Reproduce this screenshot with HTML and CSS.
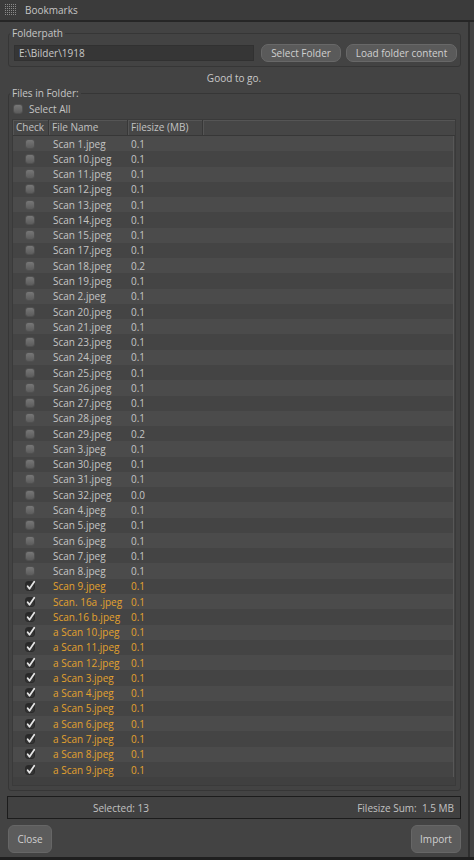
FILE: index.html
```html
<!DOCTYPE html>
<html>
<head>
<meta charset="utf-8">
<link rel="stylesheet" href="styles.css">
</head>
<body>
<div class="window">
  <div class="titlebar">
    <svg class="grip" width="11" height="12" viewBox="0 0 11 12">
      <defs><pattern id="dots" width="2" height="2" patternUnits="userSpaceOnUse"><rect width="1" height="1" fill="#8a8a8a"/></pattern></defs>
      <rect width="11" height="12" fill="url(#dots)"/>
    </svg>
    <span class="title">Bookmarks</span>
  </div>
  <div class="panel">
    <fieldset class="group">
      <legend>Folderpath</legend>
      <div class="pathrow">
        <div class="pathfield">E:\Bilder\1918</div>
        <button class="btn btn-select">Select Folder</button>
        <button class="btn btn-load">Load folder content</button>
      </div>
    </fieldset>
    <div class="status-msg">Good to go.</div>
    <fieldset class="group files">
      <legend>Files in Folder:</legend>
      <div class="selectall"><span class="cb"></span><span>Select All</span></div>
      <div class="table">
        <div class="thead">
          <div class="th">Check</div>
          <div class="th">File Name</div>
          <div class="th">Filesize (MB)</div>
          <div class="th"></div>
        </div>
        <div class="tbody">
          <div class="row"><span class="cell c"><span class="cb"></span></span><span class="cell">Scan 1.jpeg</span><span class="cell s">0.1</span></div>
          <div class="row"><span class="cell c"><span class="cb"></span></span><span class="cell">Scan 10.jpeg</span><span class="cell s">0.1</span></div>
          <div class="row"><span class="cell c"><span class="cb"></span></span><span class="cell">Scan 11.jpeg</span><span class="cell s">0.1</span></div>
          <div class="row"><span class="cell c"><span class="cb"></span></span><span class="cell">Scan 12.jpeg</span><span class="cell s">0.1</span></div>
          <div class="row"><span class="cell c"><span class="cb"></span></span><span class="cell">Scan 13.jpeg</span><span class="cell s">0.1</span></div>
          <div class="row"><span class="cell c"><span class="cb"></span></span><span class="cell">Scan 14.jpeg</span><span class="cell s">0.1</span></div>
          <div class="row"><span class="cell c"><span class="cb"></span></span><span class="cell">Scan 15.jpeg</span><span class="cell s">0.1</span></div>
          <div class="row"><span class="cell c"><span class="cb"></span></span><span class="cell">Scan 17.jpeg</span><span class="cell s">0.1</span></div>
          <div class="row"><span class="cell c"><span class="cb"></span></span><span class="cell">Scan 18.jpeg</span><span class="cell s">0.2</span></div>
          <div class="row"><span class="cell c"><span class="cb"></span></span><span class="cell">Scan 19.jpeg</span><span class="cell s">0.1</span></div>
          <div class="row"><span class="cell c"><span class="cb"></span></span><span class="cell">Scan 2.jpeg</span><span class="cell s">0.1</span></div>
          <div class="row"><span class="cell c"><span class="cb"></span></span><span class="cell">Scan 20.jpeg</span><span class="cell s">0.1</span></div>
          <div class="row"><span class="cell c"><span class="cb"></span></span><span class="cell">Scan 21.jpeg</span><span class="cell s">0.1</span></div>
          <div class="row"><span class="cell c"><span class="cb"></span></span><span class="cell">Scan 23.jpeg</span><span class="cell s">0.1</span></div>
          <div class="row"><span class="cell c"><span class="cb"></span></span><span class="cell">Scan 24.jpeg</span><span class="cell s">0.1</span></div>
          <div class="row"><span class="cell c"><span class="cb"></span></span><span class="cell">Scan 25.jpeg</span><span class="cell s">0.1</span></div>
          <div class="row"><span class="cell c"><span class="cb"></span></span><span class="cell">Scan 26.jpeg</span><span class="cell s">0.1</span></div>
          <div class="row"><span class="cell c"><span class="cb"></span></span><span class="cell">Scan 27.jpeg</span><span class="cell s">0.1</span></div>
          <div class="row"><span class="cell c"><span class="cb"></span></span><span class="cell">Scan 28.jpeg</span><span class="cell s">0.1</span></div>
          <div class="row"><span class="cell c"><span class="cb"></span></span><span class="cell">Scan 29.jpeg</span><span class="cell s">0.2</span></div>
          <div class="row"><span class="cell c"><span class="cb"></span></span><span class="cell">Scan 3.jpeg</span><span class="cell s">0.1</span></div>
          <div class="row"><span class="cell c"><span class="cb"></span></span><span class="cell">Scan 30.jpeg</span><span class="cell s">0.1</span></div>
          <div class="row"><span class="cell c"><span class="cb"></span></span><span class="cell">Scan 31.jpeg</span><span class="cell s">0.1</span></div>
          <div class="row"><span class="cell c"><span class="cb"></span></span><span class="cell">Scan 32.jpeg</span><span class="cell s">0.0</span></div>
          <div class="row"><span class="cell c"><span class="cb"></span></span><span class="cell">Scan 4.jpeg</span><span class="cell s">0.1</span></div>
          <div class="row"><span class="cell c"><span class="cb"></span></span><span class="cell">Scan 5.jpeg</span><span class="cell s">0.1</span></div>
          <div class="row"><span class="cell c"><span class="cb"></span></span><span class="cell">Scan 6.jpeg</span><span class="cell s">0.1</span></div>
          <div class="row"><span class="cell c"><span class="cb"></span></span><span class="cell">Scan 7.jpeg</span><span class="cell s">0.1</span></div>
          <div class="row"><span class="cell c"><span class="cb"></span></span><span class="cell">Scan 8.jpeg</span><span class="cell s">0.1</span></div>
          <div class="row on"><span class="cell c"><span class="cb chk"><svg viewBox="0 0 10 10"><path d="M2.4 5.6 L4.1 8 L8.4 1.6"/></svg></span></span><span class="cell">Scan 9.jpeg</span><span class="cell s">0.1</span></div>
          <div class="row on"><span class="cell c"><span class="cb chk"><svg viewBox="0 0 10 10"><path d="M2.4 5.6 L4.1 8 L8.4 1.6"/></svg></span></span><span class="cell">Scan. 16a .jpeg</span><span class="cell s">0.1</span></div>
          <div class="row on"><span class="cell c"><span class="cb chk"><svg viewBox="0 0 10 10"><path d="M2.4 5.6 L4.1 8 L8.4 1.6"/></svg></span></span><span class="cell">Scan.16 b.jpeg</span><span class="cell s">0.1</span></div>
          <div class="row on"><span class="cell c"><span class="cb chk"><svg viewBox="0 0 10 10"><path d="M2.4 5.6 L4.1 8 L8.4 1.6"/></svg></span></span><span class="cell">a Scan 10.jpeg</span><span class="cell s">0.1</span></div>
          <div class="row on"><span class="cell c"><span class="cb chk"><svg viewBox="0 0 10 10"><path d="M2.4 5.6 L4.1 8 L8.4 1.6"/></svg></span></span><span class="cell">a Scan 11.jpeg</span><span class="cell s">0.1</span></div>
          <div class="row on"><span class="cell c"><span class="cb chk"><svg viewBox="0 0 10 10"><path d="M2.4 5.6 L4.1 8 L8.4 1.6"/></svg></span></span><span class="cell">a Scan 12.jpeg</span><span class="cell s">0.1</span></div>
          <div class="row on"><span class="cell c"><span class="cb chk"><svg viewBox="0 0 10 10"><path d="M2.4 5.6 L4.1 8 L8.4 1.6"/></svg></span></span><span class="cell">a Scan 3.jpeg</span><span class="cell s">0.1</span></div>
          <div class="row on"><span class="cell c"><span class="cb chk"><svg viewBox="0 0 10 10"><path d="M2.4 5.6 L4.1 8 L8.4 1.6"/></svg></span></span><span class="cell">a Scan 4.jpeg</span><span class="cell s">0.1</span></div>
          <div class="row on"><span class="cell c"><span class="cb chk"><svg viewBox="0 0 10 10"><path d="M2.4 5.6 L4.1 8 L8.4 1.6"/></svg></span></span><span class="cell">a Scan 5.jpeg</span><span class="cell s">0.1</span></div>
          <div class="row on"><span class="cell c"><span class="cb chk"><svg viewBox="0 0 10 10"><path d="M2.4 5.6 L4.1 8 L8.4 1.6"/></svg></span></span><span class="cell">a Scan 6.jpeg</span><span class="cell s">0.1</span></div>
          <div class="row on"><span class="cell c"><span class="cb chk"><svg viewBox="0 0 10 10"><path d="M2.4 5.6 L4.1 8 L8.4 1.6"/></svg></span></span><span class="cell">a Scan 7.jpeg</span><span class="cell s">0.1</span></div>
          <div class="row on"><span class="cell c"><span class="cb chk"><svg viewBox="0 0 10 10"><path d="M2.4 5.6 L4.1 8 L8.4 1.6"/></svg></span></span><span class="cell">a Scan 8.jpeg</span><span class="cell s">0.1</span></div>
          <div class="row on"><span class="cell c"><span class="cb chk"><svg viewBox="0 0 10 10"><path d="M2.4 5.6 L4.1 8 L8.4 1.6"/></svg></span></span><span class="cell">a Scan 9.jpeg</span><span class="cell s">0.1</span></div>
        </div>
      </div>
    </fieldset>
    <div class="statusbar">
      <div class="st-left">Selected: 13</div>
      <div class="st-right">Filesize Sum:&nbsp; 1.5 MB</div>
    </div>
    <div class="actions">
      <button class="btn big btn-close">Close</button>
      <button class="btn big btn-import">Import</button>
    </div>
  </div>
</div>
</body>
</html>
```
FILE: styles.css
```css
* { box-sizing: border-box; }
html, body { margin: 0; padding: 0; }
body {
  background: #3e3e3e;
  font-family: "Open Sans", "Liberation Sans", sans-serif;
  font-size: 10px;
  color: #c4c4c4;
}
.window {
  width: 474px;
  height: 860px;
  display: flex;
  flex-direction: column;
  background: #434343;
  border-bottom: 3px solid #1f1f1f;
}
.titlebar {
  height: 22px;
  flex: none;
  display: flex;
  align-items: center;
  gap: 9px;
  padding-left: 5px;
  background: #3b3b3b;
  border-bottom: 2px solid #262626;
}
.grip { display: block; }
.title { color: #c6c6c6; line-height: 12px; }
.panel {
  flex: 1;
  display: flex;
  flex-direction: column;
  padding: 5px 7px 4px 7px;
  min-height: 0;
  border-right: 2px solid #2e2e2e;
  margin-right: 4px;
}
.group {
  margin: 0 0 0 1px;
  border: 1px solid #363636;
  border-radius: 3px;
  padding: 5px 3px 4px 5px;
  min-width: 0;
}
.group legend {
  padding: 0 2px;
  margin-left: -4px;
  line-height: 12px;
  color: #c6c6c6;
}
.pathrow {
  display: flex;
  align-items: center;
  height: 18px;
}
.pathfield {
  flex: 1;
  height: 16px;
  background: #363636;
  border: 1px solid #313131;
  padding-left: 4px;
  line-height: 14px;
  color: #c8c8c8;
}
.btn {
  font-family: "Open Sans", "Liberation Sans", sans-serif;
  font-size: 10px;
  color: #d0d0d0;
  background: #5a5a5a;
  border: 1px solid #686868;
  border-radius: 7px;
  padding: 0;
  height: 18px;
  line-height: 15px;
}
.btn-select { width: 80px; margin-left: 7px; }
.btn-load { width: 111px; margin-left: 5px; }
.status-msg {
  text-align: center;
  line-height: 12px;
  margin: 5px 0 3px;
  color: #c8c8c8;
}
.files {
  flex: 1;
  display: flex;
  flex-direction: column;
  padding: 4px 4px 4px 3px;
  min-height: 0;
}
.files legend { margin-left: -2px; }
.selectall {
  display: flex;
  align-items: center;
  gap: 6px;
  height: 12px;
  padding-left: 1px;
}
.cb {
  display: block;
  flex: none;
  width: 10px;
  height: 10px;
  border-radius: 3px;
  background: linear-gradient(#777777, #5c5c5c);
  border: 1px solid #505050;
}
.cb.chk {
  background: linear-gradient(#262626, #383838);
  border: 1px solid #2a2a2a;
}
.cb.chk svg {
  display: block;
  width: 11px;
  height: 11px;
  margin: -2px 0 0 -1px;
  fill: none;
  stroke: #e4e4e4;
  stroke-width: 1.6;
  stroke-linecap: round;
  stroke-linejoin: round;
}
.table {
  flex: 1;
  margin-top: 4px;
  border: 1px solid #3a3a3a;
  background: #404040;
  display: flex;
  flex-direction: column;
  min-height: 0;
}
.thead {
  display: grid;
  grid-template-columns: 36px 79px 75px 1fr;
  height: 16px;
  background: #464646;
  border-bottom: 1px solid #373737;
}
.th {
  border-right: 1px solid #383838;
  box-shadow: inset 1px 1px 0 #555555;
  padding-left: 3px;
  line-height: 14px;
  color: #c2c2c2;
}
.th:last-child { border-right: none; }
.tbody { margin-right: 1px; border-right: 1px solid #575757; }
.row {
  display: grid;
  grid-template-columns: 36px 79px 75px 1fr;
  height: 15.27px;
  align-items: center;
  background: #444444;
}
.row:nth-child(odd) { background: #4b4b4b; }
.cell { line-height: 12px; padding-left: 4px; white-space: nowrap; color: #c4c4c4; }
.cell.s { padding-left: 3px; }
.cell.c { padding-left: 12px; display: flex; align-items: center; }
.row.on .cell { color: #e3a22e; }
.statusbar {
  margin-top: 5px;
  height: 23px;
  flex: none;
  border: 1px solid #1c1c1c;
  background: #414141;
  display: grid;
  grid-template-columns: 1fr 1fr;
  align-items: center;
  color: #c2c2c2;
}
.st-left { text-align: center; }
.st-right { text-align: right; padding-right: 6px; }
.actions {
  margin-top: 6px;
  display: flex;
  justify-content: space-between;
  padding: 0 0 0 1px;
  flex: none;
}
.btn.big {
  height: 28px;
  border-radius: 6px;
  background: #5c5c5c;
  border: 1px solid #666666;
  line-height: 26px;
}
.btn-close { width: 44px; }
.btn-import { width: 50px; }
```
